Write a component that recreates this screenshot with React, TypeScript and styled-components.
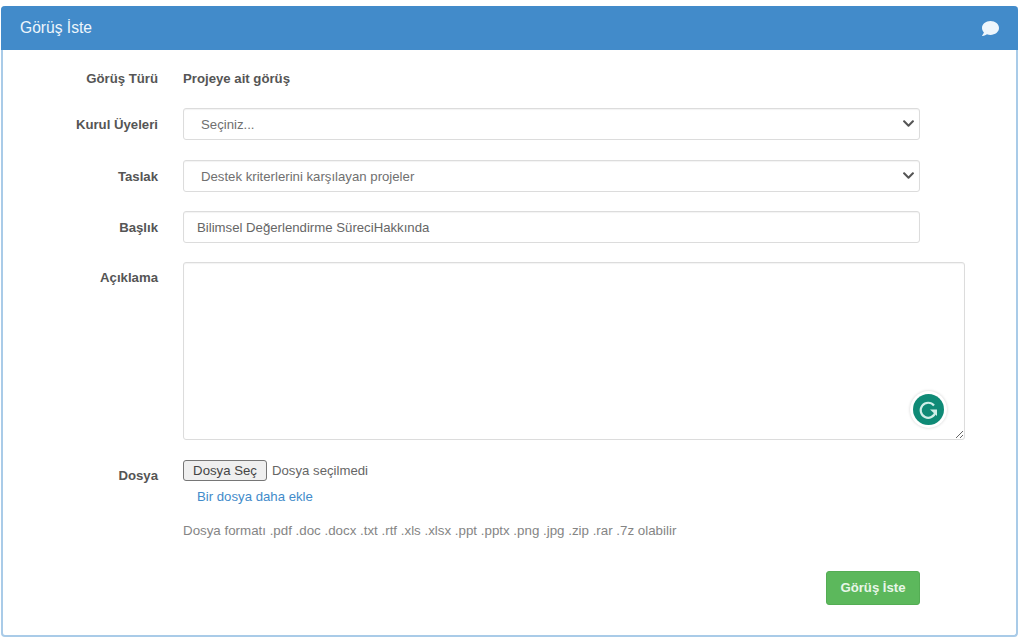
import React from "react";
import styled, { createGlobalStyle } from "styled-components";
import { FaComment, FaChevronDown } from "react-icons/fa";

const GlobalStyle = createGlobalStyle`
  html, body {
    margin: 0;
    padding: 0;
    background: #ffffff;
    font-family: "Liberation Sans", Arial, sans-serif;
    font-size: 13.2px;
    color: #444;
  }
  * { box-sizing: border-box; }
`;

const Page = styled.div`
  width: 1020px;
  height: 638px;
  padding: 6px 2px 1px 1px;
`;

const Panel = styled.section`
  height: 631px;
  border: 2px solid #a9cbe8;
  border-top: 0;
  border-radius: 4px;
  display: flex;
  flex-direction: column;
`;

const PanelHeader = styled.header`
  height: 44px;
  margin: 0 -2px;
  background: #428bca;
  border-radius: 4px 4px 0 0;
  color: #eef6fc;
  display: flex;
  align-items: center;
  justify-content: space-between;
  padding: 0 19px;
  font-size: 15.6px;
`;

const Form = styled.form`
  flex: 1;
  display: flex;
  flex-direction: column;
  padding-top: 16px;
`;

const Row = styled.div<{ $height: number; $gap: number; $center?: boolean }>`
  display: grid;
  grid-template-columns: 155px 1fr;
  column-gap: 25px;
  min-height: ${({ $height }) => $height}px;
  margin-bottom: ${({ $gap }) => $gap}px;
  align-items: ${({ $center }) => ($center ? "center" : "start")};
`;

const Label = styled.label<{ $top?: number }>`
  text-align: right;
  font-weight: bold;
  font-size: 13.2px;
  color: #555;
  padding-top: ${({ $top }) => $top ?? 0}px;
`;

const StaticValue = styled.div`
  font-weight: bold;
  font-size: 13.2px;
  color: #555;
`;

const SelectWrap = styled.div`
  position: relative;
  width: 737px;
  height: 32px;
  color: #555;
`;

const Select = styled.select`
  appearance: none;
  width: 100%;
  height: 100%;
  background: #fff;
  border: 1px solid #dcdcdc;
  border-radius: 3px;
  box-shadow: inset 0 1px 1px rgba(0, 0, 0, 0.05);
  padding: 0 14px 0 17px;
  font: 13.2px "Liberation Sans", Arial, sans-serif;
  color: #707070;
`;

const Chevron = styled.span`
  position: absolute;
  right: 5px;
  top: 9px;
  display: flex;
  color: #555;
  pointer-events: none;
`;

const TextInput = styled.input`
  width: 737px;
  height: 32px;
  border: 1px solid #dcdcdc;
  border-radius: 3px;
  padding: 0 13px;
  font: 13.2px "Liberation Sans", Arial, sans-serif;
  color: #666;
  box-shadow: inset 0 1px 1px rgba(0, 0, 0, 0.05);
`;

const TextAreaWrap = styled.div`
  position: relative;
  width: 782px;
  height: 178px;
`;

const TextArea = styled.textarea`
  display: block;
  width: 100%;
  height: 100%;
  border: 1px solid #dcdcdc;
  border-radius: 3px;
  box-shadow: inset 0 1px 1px rgba(0, 0, 0, 0.05);
  resize: both;
`;

const GrammarlyBadge = styled.span`
  position: absolute;
  right: 18px;
  bottom: 12px;
  width: 37px;
  height: 37px;
  border-radius: 50%;
  background: #fff;
  box-shadow: 0 0 3px rgba(0, 0, 0, 0.18);
  display: flex;
  align-items: center;
  justify-content: center;
`;

const FileColumn = styled.div`
  display: flex;
  flex-direction: column;
  align-items: flex-start;
`;

const FileLine = styled.div`
  display: flex;
  align-items: center;
  gap: 5px;
  height: 21px;
  color: #666;
`;

const FileButton = styled.button`
  height: 21px;
  width: 84px;
  padding: 0;
  background: #efefef;
  border: 1px solid #767676;
  border-radius: 3px;
  font: 13.2px "Liberation Sans", Arial, sans-serif;
  color: #444;
`;

const AddLink = styled.a`
  margin: 9px 0 0 14px;
  color: #428bca;
  font-size: 13.2px;
  line-height: 14px;
`;

const FormatHint = styled.p`
  margin: 20px 0 0;
  font-size: 13.33px;
  line-height: 14px;
  color: #858585;
`;

const Footer = styled.div`
  display: flex;
  justify-content: flex-end;
  width: 917px;
  margin-top: 27px;
`;

const SubmitButton = styled.button`
  width: 94px;
  height: 34px;
  padding: 0 0 2px;
  background: #5cb85c;
  border: 1px solid #54ad54;
  border-radius: 3px;
  color: #e8f6e8;
  font: bold 13.2px "Liberation Sans", Arial, sans-serif;
`;

const App: React.FC = () => {
  return (
    <Page>
      <GlobalStyle />
      <Panel>
        <PanelHeader>
          Görüş İste
          <FaComment size={17} />
        </PanelHeader>
        <Form onSubmit={(e) => e.preventDefault()}>
          <Row $height={24} $gap={18} $center>
            <Label>Görüş Türü</Label>
            <StaticValue>Projeye ait görüş</StaticValue>
          </Row>
          <Row $height={32} $gap={20} $center>
            <Label>Kurul Üyeleri</Label>
            <SelectWrap>
              <Select defaultValue="sec">
                <option value="sec">Seçiniz...</option>
              </Select>
              <Chevron><FaChevronDown size={13} /></Chevron>
            </SelectWrap>
          </Row>
          <Row $height={32} $gap={19} $center>
            <Label>Taslak</Label>
            <SelectWrap>
              <Select defaultValue="destek">
                <option value="destek">Destek kriterlerini karşılayan projeler</option>
              </Select>
              <Chevron><FaChevronDown size={13} /></Chevron>
            </SelectWrap>
          </Row>
          <Row $height={32} $gap={19} $center>
            <Label>Başlık</Label>
            <TextInput defaultValue="Bilimsel Değerlendirme SüreciHakkında" />
          </Row>
          <Row $height={178} $gap={20}>
            <Label $top={8}>Açıklama</Label>
            <TextAreaWrap>
              <TextArea />
              <GrammarlyBadge>
                <svg width="31" height="31" viewBox="0 0 31 31">
                  <circle cx="15.5" cy="15.5" r="15.5" fill="#0f8a76" />
                  <path
                    d="M21 11.5A7.5 7.5 0 1 0 22.5 18"
                    fill="none"
                    stroke="#cfeee8"
                    strokeWidth="2.2"
                  />
                  <path d="M17 15.5h7v6.5z" fill="#cfeee8" />
                </svg>
              </GrammarlyBadge>
            </TextAreaWrap>
          </Row>
          <Row $height={84} $gap={0}>
            <Label $top={8}>Dosya</Label>
            <FileColumn>
              <FileLine>
                <FileButton type="button">Dosya Seç</FileButton>
                Dosya seçilmedi
              </FileLine>
              <AddLink>Bir dosya daha ekle</AddLink>
              <FormatHint>
                Dosya formatı .pdf .doc .docx .txt .rtf .xls .xlsx .ppt .pptx .png .jpg .zip .rar .7z olabilir
              </FormatHint>
            </FileColumn>
          </Row>
          <Footer>
            <SubmitButton type="submit">Görüş İste</SubmitButton>
          </Footer>
        </Form>
      </Panel>
    </Page>
  );
};

export default App;
